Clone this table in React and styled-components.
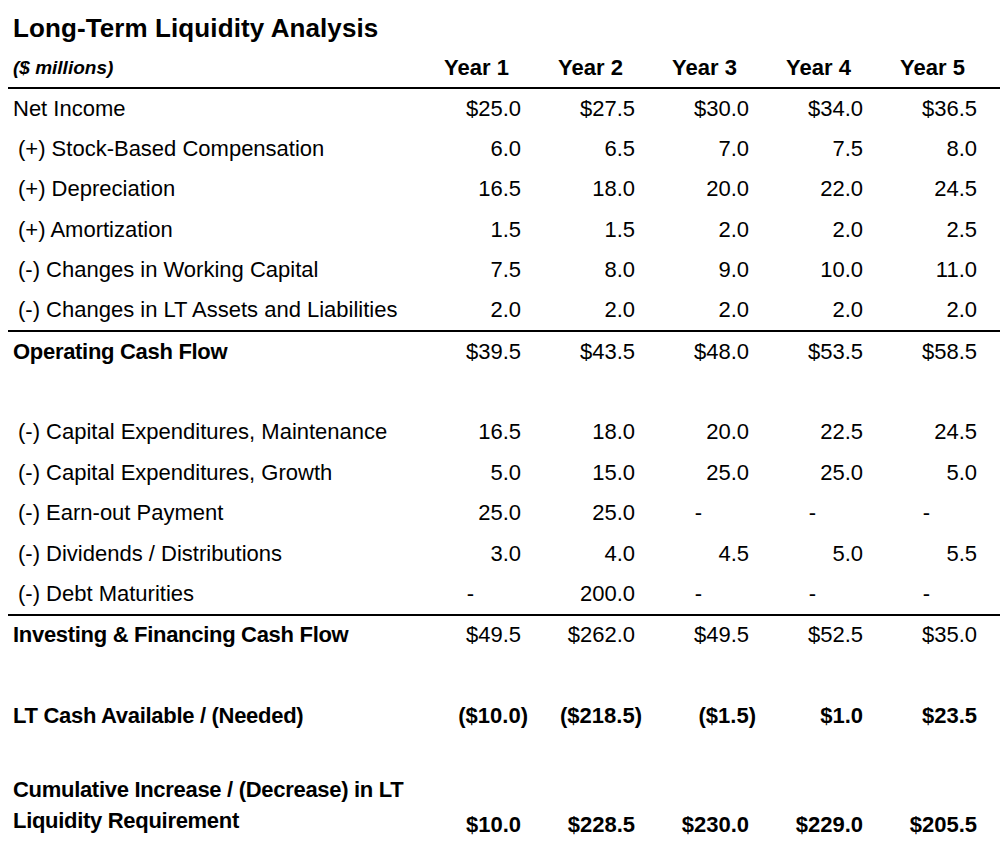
import React from 'react';
import styled, { createGlobalStyle } from 'styled-components';

const GlobalStyle = createGlobalStyle`
    body {
        margin: 0;
        background: #fff;
        color: #000;
        font-family: "Liberation Sans", Arial, sans-serif;
    }
`;

const Page = styled.div`
    width: 1000px;
    padding: 13px 0 0 8px;
    box-sizing: border-box;
    overflow: hidden;
`;

const Title = styled.h1`
    margin: 0 0 0 5px;
    font-size: 26px;
    font-weight: 700;
    line-height: 30px;
    letter-spacing: 0.1px;
`;

const Table = styled.table`
    width: 992px;
    border-collapse: collapse;
    table-layout: fixed;
    font-size: 22px;
    margin-top: 6px;
`;

const Row = styled.tr`
    height: ${p => p.h || 40.5}px;
    border-top: ${p => (p.ruled ? '2px solid #000' : 'none')};
`;

const HeadRow = styled.tr`
    height: 39px;
    border-bottom: 2px solid #000;
`;

const Label = styled.td`
    padding: 0 0 0 ${p => (p.indent ? 10 : 5)}px;
    font-weight: ${p => (p.bold ? 700 : 400)};
    white-space: nowrap;
    vertical-align: ${p => (p.bottom ? 'bottom' : 'middle')};
    line-height: ${p => (p.bottom ? '31px' : 'normal')};
    padding-bottom: ${p => (p.bottom ? 5 : 0)}px;
    letter-spacing: ${p => (p.bold ? -0.3 : 0)}px;
`;

const Units = styled.th`
    text-align: left;
    padding-left: 5px;
    font-size: 19px;
    font-style: italic;
    font-weight: 700;
`;

const YearHead = styled.th`
    text-align: center;
    font-size: 22px;
    font-weight: 700;
    padding-right: ${p => (p.last ? 11 : 0)}px;
`;

const Num = styled.td`
    font-size: 22px;
    text-align: ${p => (p.dash ? 'center' : 'right')};
    padding-right: ${p => (p.last ? 23 : 12) - (p.neg ? 7 : 0)}px;
    font-weight: ${p => (p.bold ? 700 : 400)};
    white-space: nowrap;
    vertical-align: ${p => (p.bottom ? 'bottom' : 'middle')};
    line-height: ${p => (p.bottom ? '31px' : 'normal')};
`;

const years = ['Year 1', 'Year 2', 'Year 3', 'Year 4', 'Year 5'];

const rows = [
    { label: 'Net Income', values: ['$25.0', '$27.5', '$30.0', '$34.0', '$36.5'] },
    { label: '(+) Stock-Based Compensation', indent: true, values: ['6.0', '6.5', '7.0', '7.5', '8.0'] },
    { label: '(+) Depreciation', indent: true, values: ['16.5', '18.0', '20.0', '22.0', '24.5'] },
    { label: '(+) Amortization', indent: true, values: ['1.5', '1.5', '2.0', '2.0', '2.5'] },
    { label: '(-) Changes in Working Capital', indent: true, values: ['7.5', '8.0', '9.0', '10.0', '11.0'] },
    { label: '(-) Changes in LT Assets and Liabilities', indent: true, values: ['2.0', '2.0', '2.0', '2.0', '2.0'] },
    { label: 'Operating Cash Flow', bold: true, ruled: true, values: ['$39.5', '$43.5', '$48.0', '$53.5', '$58.5'] },
    { spacer: true },
    { label: '(-) Capital Expenditures, Maintenance', indent: true, values: ['16.5', '18.0', '20.0', '22.5', '24.5'] },
    { label: '(-) Capital Expenditures, Growth', indent: true, values: ['5.0', '15.0', '25.0', '25.0', '5.0'] },
    { label: '(-) Earn-out Payment', indent: true, values: ['25.0', '25.0', '-', '-', '-'] },
    { label: '(-) Dividends / Distributions', indent: true, values: ['3.0', '4.0', '4.5', '5.0', '5.5'] },
    { label: '(-) Debt Maturities', indent: true, values: ['-', '200.0', '-', '-', '-'] },
    { label: 'Investing & Financing Cash Flow', bold: true, ruled: true, values: ['$49.5', '$262.0', '$49.5', '$52.5', '$35.0'] },
    { spacer: true },
    { label: 'LT Cash Available / (Needed)', bold: true, boldNums: true, values: ['($10.0)', '($218.5)', '($1.5)', '$1.0', '$23.5'] },
    { spacer: true, h: 35 },
];

const cumulative = ['$10.0', '$228.5', '$230.0', '$229.0', '$205.5'];

export default function App() {
    return (
        <Page>
            <GlobalStyle />
            <Title>Long-Term Liquidity Analysis</Title>
            <Table>
                <colgroup>
                    <col style={{ width: 411 }} />
                    <col style={{ width: 114 }} />
                    <col style={{ width: 114 }} />
                    <col style={{ width: 114 }} />
                    <col style={{ width: 114 }} />
                    <col style={{ width: 125 }} />
                </colgroup>
                <thead>
                    <HeadRow>
                        <Units>($ millions)</Units>
                        {years.map((y, i) => (
                            <YearHead key={y} last={i === 4}>{y}</YearHead>
                        ))}
                    </HeadRow>
                </thead>
                <tbody>
                    {rows.map((r, idx) =>
                        r.spacer ? (
                            <Row key={idx} h={r.h}><td colSpan={6} /></Row>
                        ) : (
                            <Row key={idx} ruled={r.ruled}>
                                <Label indent={r.indent} bold={r.bold}>{r.label}</Label>
                                {r.values.map((v, i) => (
                                    <Num
                                        key={i}
                                        dash={v === '-'}
                                        neg={v.startsWith('(')}
                                        last={i === 4}
                                        bold={r.boldNums}
                                    >
                                        {v}
                                    </Num>
                                ))}
                            </Row>
                        )
                    )}
                    <Row h={70}>
                        <Label bold bottom>
                            Cumulative Increase / (Decrease) in LT<br />Liquidity Requirement
                        </Label>
                        {cumulative.map((v, i) => (
                            <Num key={i} bold bottom last={i === 4}>{v}</Num>
                        ))}
                    </Row>
                </tbody>
            </Table>
        </Page>
    );
}
